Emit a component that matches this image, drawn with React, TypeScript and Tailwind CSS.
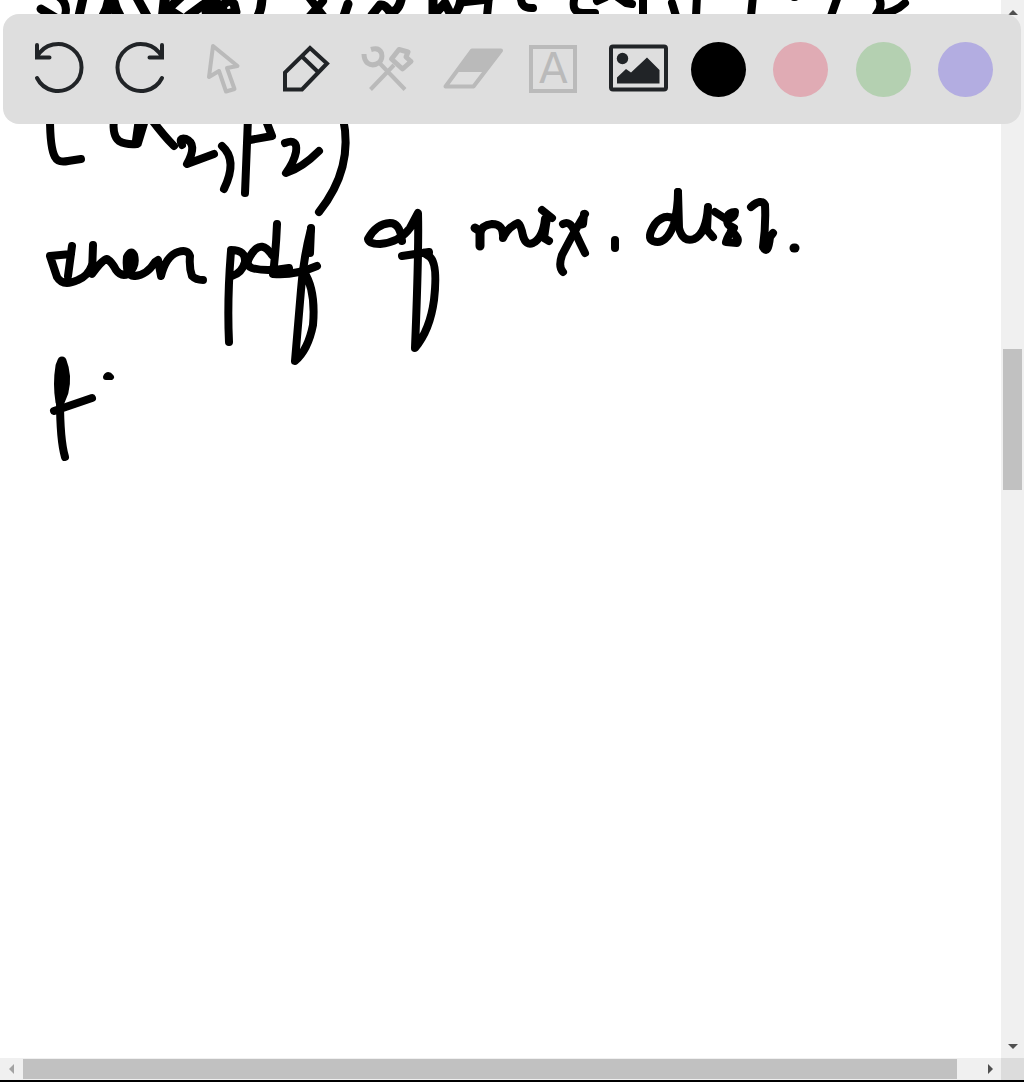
import type { ReactNode } from "react";

interface Stroke {
  d: string;
  width?: number;
  fill?: boolean;
}

const INK: Stroke[] = [
  // first line, mostly hidden behind the toolbar
  { d: "M41 9 L56 18", width: 9 },
  { d: "M56 -5 Q69 2 65 16" },
  { d: "M83 -2 L79 16", width: 9 },
  { d: "M110 -4 Q109 8 104 16 M112 -4 Q114 8 119 16", width: 11 },
  { d: "M136 -4 L147 16", width: 9 },
  { d: "M165 -3 L163 16", width: 10 },
  { d: "M182 -4 L168 9 L182 18", width: 9 },
  { d: "M188 16 L203 5 L214 16 M203 5 L213 -2 L226 14", width: 9 },
  { d: "M206 12 Q214 4 220 12 Q226 -4 234 4 L236 12 L222 15", width: 9 },
  { d: "M262 -4 Q262 8 258 16", width: 9 },
  { d: "M308 -4 L324 17 M323 1 L309 17" },
  { d: "M348 4 L344 16", width: 9 },
  { d: "M372 15 L380 5 Q385 4 390 12 Q398 12 401 0", width: 9 },
  { d: "M433 -4 L433 16 L445 3 L452 17 Q460 10 461 -2 M461 2 L488 -1", width: 9 },
  { d: "M489 -4 L487 16" },
  { d: "M521 -4 Q520 9 533 8" },
  { d: "M575 -4 Q570 13 583 13 L595 13" },
  { d: "M597 1 L606 -3 M616 -4 L626 3 L632 4" },
  { d: "M643 -4 L643 16 M672 3 L676 16" },
  { d: "M697 -4 L696 16 M753 -4 L751 16" },
  { d: "M794 -3 L795 -3 M838 -4 L831 16" },
  { d: "M878 -4 Q884 6 876 15 Q895 13 905 3" },
  // second line
  { d: "M50 118 Q50 148 55 157 Q58 163 68 161 L81 159" },
  { d: "M114 118 Q112 136 119 141 Q126 145 137 144 L142 118" },
  { d: "M136 122 L147 122 L140 145 L133 144 Z", fill: true, width: 3 },
  { d: "M152 120 Q164 136 174 146" },
  { d: "M182 145 Q178 137 186 139 Q198 144 187 164 L214 154" },
  { d: "M222 146 Q238 160 224 189" },
  { d: "M248 118 L245 193 M265 118 L272 136 L250 140" },
  { d: "M285 143 Q298 138 296 152 Q294 162 286 173 Q302 168 319 151" },
  { d: "M343 118 Q354 168 319 212" },
  // then
  { d: "M72 246 L68 276 M71 254 L50 256 L57 277 Q63 287 78 280 Q88 276 92 265" },
  {
    d: "M93 245 L92 274 Q102 260 107 259 Q112 262 116 270 Q121 277 128 274 Q137 266 134 255 Q131 249 127 257 Q125 277 135 276 Q147 275 155 262 L158 260 L161 276 Q166 256 178 252 Q188 249 190 256 Q189 268 192 276 Q196 280 203 280",
  },
  // pdf
  { d: "M231 251 Q227 300 229 342 M231 250 Q246 250 245 262 Q242 273 232 276" },
  { d: "M272 255 Q262 240 253 252 Q243 265 252 268 Q266 272 289 268" },
  { d: "M277 224 Q276 250 273 274 Q294 276 317 266" },
  { d: "M311 228 L310 253" },
  { d: "M311 229 Q303 260 301 290 L295 361 Q308 350 313 325 Q316 290 304 272" },
  // of
  {
    d: "M402 241 Q400 223 390 223 Q376 224 368 239 Q369 244 380 244 Q400 242 410 228 L418 213 Q419 250 415 348 Q430 330 434 300 Q438 264 430 257 L424 253",
  },
  { d: "M402 256 L429 252" },
  // mix.
  { d: "M475 228 L480 231 L480 246", width: 9 },
  { d: "M480 233 Q482 225 492 224 Q504 224 503 238 Q508 227 518 223 Q521 225 523 236 Q526 246 533 243 Q543 238 545 219" },
  { d: "M542 210 L552 218 M547 218 L544 238 L549 241" },
  { d: "M563 224 Q570 220 575 232 Q580 243 585 253" },
  { d: "M584 214 L583 224 L579 225 M585 214 Q572 235 562 255 Q558 267 563 272" },
  { d: "M615 240 V248" },
  // dist.
  { d: "M675 219 Q664 213 655 224 Q646 238 653 241 Q666 246 674 224 Q678 208 678 192" },
  { d: "M678 192 L679 228 Q683 243 694 239 Q706 234 708 207 L707 230 L713 237" },
  { d: "M715 212 L726 219 M727 217 Q729 212 735 212 Q735 217 729 219 Q724 224 734 228 Q728 235 726 242 L737 243 Q740 238 731 231" },
  { d: "M751 207 Q761 198 765 205 Q766 225 763 247 Q768 256 770 237 L773 233" },
  { d: "M794 248 L795 248", width: 9 },
  // last line, still being written
  { d: "M62 361 Q68 376 64 392 L60 402 Q57 384 60 366 Z", width: 9, fill: true },
  { d: "M60 400 Q60 440 65 457 M54 411 L92 398" },
  { d: "M106 377 Q108 373 111 377 Z", width: 6, fill: true },
];

const SWATCHES = [
  { name: "Black", color: "bg-black" },
  { name: "Pink", color: "bg-[#e0abb4]" },
  { name: "Green", color: "bg-[#b4d0b1]" },
  { name: "Purple", color: "bg-[#b3ade1]" },
];

function Icon({ children }: { children: ReactNode }) {
  return (
    <svg
      viewBox="-2 -2 64 64"
      className="w-16 h-16"
      fill="none"
      stroke="currentColor"
      strokeWidth={4}
      strokeLinejoin="round"
      aria-hidden="true"
    >
      {children}
    </svg>
  );
}

function ToolButton({
  label,
  muted,
  children,
}: {
  label: string;
  muted?: boolean;
  children: ReactNode;
}) {
  return (
    <button
      type="button"
      aria-label={label}
      className={`flex items-center justify-center ${muted ? "text-[#bababa]" : "text-[#212427]"}`}
    >
      {children}
    </button>
  );
}

function Toolbar() {
  return (
    <div
      role="toolbar"
      aria-label="Drawing tools"
      className="absolute inset-x-[3px] top-[14px] grid grid-cols-12 h-[110px] px-[14px] rounded-2xl bg-[#dedede]"
    >
      <ToolButton label="Undo">
        <Icon>
          <path d="M9 39 A23.500 23.500 0 1 0 9 18" strokeLinecap="round" />
          <path d="M9 6 V18.500 H21.500" strokeLinecap="round" strokeLinejoin="miter" />
        </Icon>
      </ToolButton>
      <ToolButton label="Redo">
        <Icon>
          <path d="M51 39 A23.500 23.500 0 1 1 51 18" strokeLinecap="round" />
          <path d="M51 6 V18.500 H38.500" strokeLinecap="round" strokeLinejoin="miter" />
        </Icon>
      </ToolButton>
      <ToolButton label="Select" muted>
        <Icon>
          <path d="M20 7 L44.500 27 L34 29 L41.500 50 L33 52.500 L26 32 L16 38 Z" />
        </Icon>
      </ToolButton>
      <ToolButton label="Pen">
        <Icon>
          <path d="M34 9 L51 24.500 L26 50.500 H9 V33.500 Z M26 17.500 L41 32" strokeLinejoin="miter" />
        </Icon>
      </ToolButton>
      <ToolButton label="Tools" muted>
        <Icon>
          <path d="M13 10.500 Q21 8 23.500 14 Q25 20 21 23.500 Q15 28 9.500 24 Q6 21 6 15" strokeWidth={5} />
          <path d="M21 23.500 L47 50.500 M36 26 L12.500 50.500" />
          <path d="M33.500 20 L44.500 30 L53 22.500 L48 18 L50 13 L41 10.500 Z" strokeWidth={5} />
        </Icon>
      </ToolButton>
      <ToolButton label="Eraser" muted>
        <Icon>
          <path d="M31 11.500 H60 L32.500 47.500 H4.500 Z" />
          <path d="M31 11.500 H60 L43 33 H14 Z" fill="currentColor" stroke="none" />
        </Icon>
      </ToolButton>
      <ToolButton label="Text" muted>
        <span className="flex items-center justify-center size-12 border-4 border-current font-['DejaVu_Sans',sans-serif] text-[42px] leading-none">
          A
        </span>
      </ToolButton>
      <ToolButton label="Insert image">
        <Icon>
          <rect x="5" y="7.500" width="55" height="43" rx="2" />
          <circle cx="16.500" cy="19.500" r="5.700" fill="currentColor" stroke="none" />
          <path
            d="M11 44.500 V38.500 L20 30 L25 33.500 L41 18.500 L53.500 31 V44.500 Z"
            fill="currentColor"
            stroke="none"
          />
        </Icon>
      </ToolButton>
      {SWATCHES.map((s) => (
        <button
          key={s.name}
          type="button"
          aria-label={s.name}
          className="flex items-center justify-center"
        >
          <span className={`size-[55px] rounded-full ${s.color}`} />
        </button>
      ))}
    </div>
  );
}

function Arrow({ d, label, className }: { d: string; label: string; className: string }) {
  return (
    <button type="button" aria-label={label} className={`flex items-center justify-center shrink-0 ${className}`}>
      <svg viewBox="0 0 10 10" className="w-2.5 h-2.5" fill="currentColor" aria-hidden="true">
        <path d={d} />
      </svg>
    </button>
  );
}

export default function App() {
  return (
    <div className="flex flex-col h-screen overflow-hidden bg-white border-b-2 border-black">
      <main className="relative flex flex-1 min-h-0">
        <div className="flex-1 min-w-0 overflow-hidden">
          <svg
            width="1000"
            height="1058"
            viewBox="0 0 1000 1058"
            fill="none"
            stroke="black"
            strokeLinecap="round"
            strokeLinejoin="round"
            role="img"
            aria-label="Handwritten notes: then pdf of mix. dist."
          >
            {INK.map((s) => (
              <path key={s.d} d={s.d} strokeWidth={s.width ?? 8} fill={s.fill ? "black" : "none"} />
            ))}
          </svg>
        </div>

        {/* Vertical scrollbar */}
        <div className="flex flex-col w-[23px] px-0.5 bg-[#f0f0f0]">
          <Arrow label="Scroll up" d="M0 8 L5 3 L10 8 Z" className="h-6 text-[#505050]" />
          <div className="grow-[325] basis-0" />
          <div className="grow-[141] basis-0 bg-[#c1c1c1]" />
          <div className="grow-[544] basis-0" />
          <Arrow label="Scroll down" d="M0 3 H10 L5 8 Z" className="h-6 text-[#505050]" />
        </div>

        <Toolbar />
      </main>

      {/* Horizontal scrollbar */}
      <div className="flex h-[22px] bg-[#f0f0f0]">
        <div className="flex flex-1 min-w-0 py-px">
          <Arrow label="Scroll left" d="M7 0 V10 L2 5 Z" className="w-[23px] text-[#a3a3a3]" />
          <div className="grow-[934] basis-0 bg-[#c1c1c1]" />
          <div className="grow-[21] basis-0" />
          <Arrow label="Scroll right" d="M3 0 V10 L8 5 Z" className="w-[23px] text-[#505050]" />
        </div>
        <div className="w-[23px] bg-[#dcdcdc]" />
      </div>
    </div>
  );
}
